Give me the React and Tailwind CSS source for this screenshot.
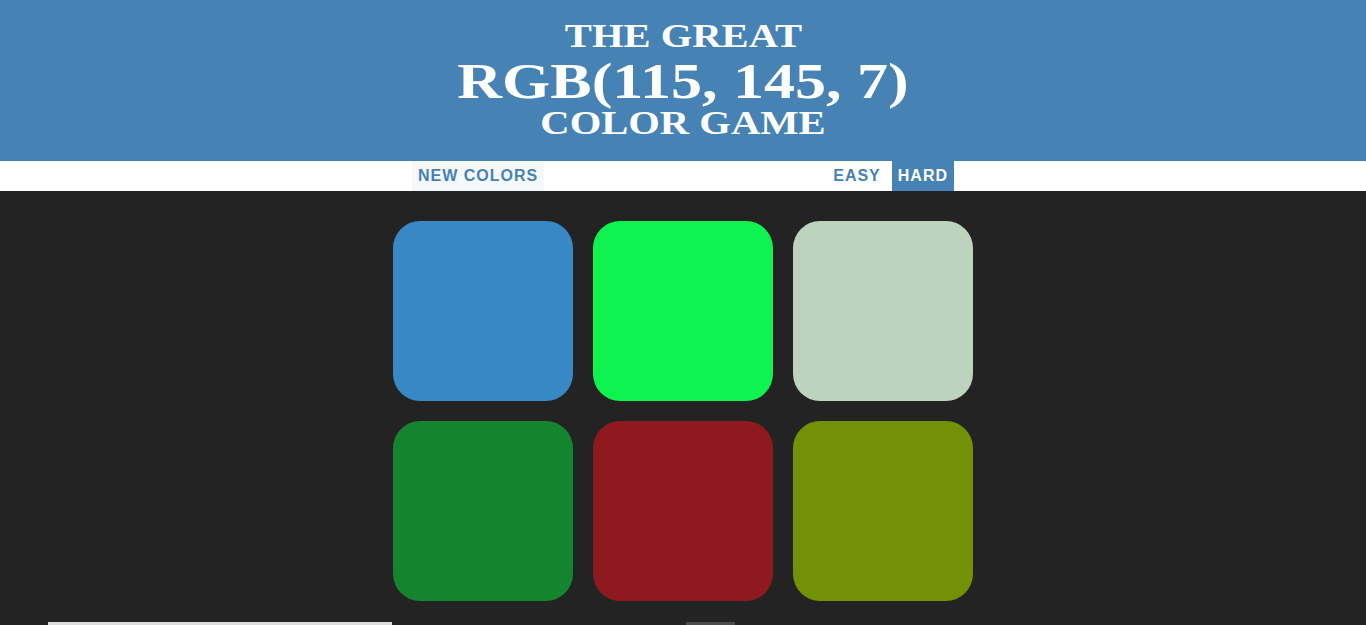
import React, { useState } from 'react';

const squares = [
  'rgb(57, 136, 198)',
  'rgb(14, 243, 80)',
  'rgb(190, 211, 189)',
  'rgb(20, 133, 46)',
  'rgb(142, 26, 31)',
  'rgb(115, 145, 7)',
];

export default function App() {
  const [mode, setMode] = useState('hard');

  return (
    <div className="min-h-screen bg-[#232323] font-['Liberation_Sans',Arial,sans-serif]">
      {/* title banner */}
      <h1 className="h-[161px] bg-[#4682b4] text-white text-center uppercase font-bold font-['Liberation_Serif','Times_New_Roman',serif] pt-[20px]">
        <span className="block text-[33px] leading-[33px]">
          <span className="inline-block scale-x-[1.23]">The Great</span>
        </span>
        <span className="block mt-[3px] text-[50px] leading-[50px]">
          <span className="inline-block scale-x-[1.24]">RGB(115, 145, 7)</span>
        </span>
        <span className="block mt-[1px] text-[33px] leading-[33px]">
          <span className="inline-block scale-x-[1.23]">Color Game</span>
        </span>
      </h1>

      {/* control stripe */}
      <div className="h-[30px] bg-white flex justify-center gap-[5px] text-[16px] font-bold uppercase tracking-[1px]">
        <button className="h-full px-[6px] bg-[#f7f8fa] text-[#4682b4] uppercase">New Colors</button>
        <span className="w-[273px]" />
        <button
          onClick={() => setMode('easy')}
          className={mode === 'easy' ? 'h-full px-[6px] bg-[#4682b4] text-white uppercase' : 'h-full px-[6px] text-[#4682b4] uppercase'}
        >
          Easy
        </button>
        <button
          onClick={() => setMode('hard')}
          className={mode === 'hard' ? 'h-full px-[6px] bg-[#4682b4] text-white uppercase' : 'h-full px-[6px] text-[#4682b4] uppercase'}
        >
          Hard
        </button>
      </div>

      {/* squares */}
      <div className="w-[600px] mx-auto mt-[20px] grid grid-cols-3">
        {squares.map((c, i) => (
          <div key={i} className="m-[10px] h-[180px] rounded-[27px]" style={{ backgroundColor: c }} />
        ))}
      </div>

      <div className="flex mt-[11px] h-[40px]">
        <div className="ml-[48px] w-[344px] bg-[#dcdcdc]" />
        <div className="ml-[294px] w-[49px] bg-[#4b4b4b]" />
      </div>
    </div>
  );
}
